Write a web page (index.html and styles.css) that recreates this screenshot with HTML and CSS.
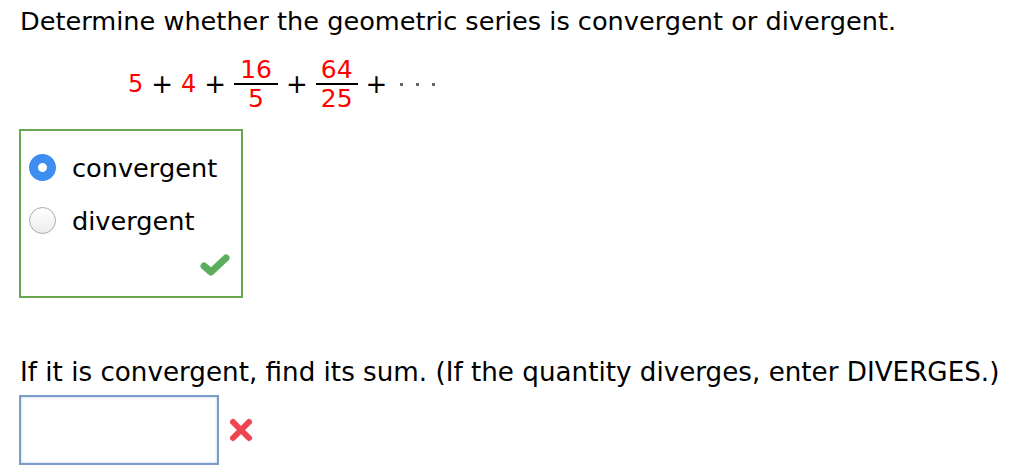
FILE: index.html
```html
<!DOCTYPE html>
<html>
<head>
<meta charset="utf-8">
<link rel="stylesheet" href="styles.css">
</head>
<body>
<div class="page">
  <p class="q">Determine whether the geometric series is convergent or divergent.</p>
  <div class="eq">
    <span class="r">5</span><span class="op">+</span><span class="r">4</span><span class="op">+</span>
    <span class="frac"><span class="num r">16</span><span class="den r">5</span></span>
    <span class="op">+</span>
    <span class="frac f2"><span class="num r">64</span><span class="den r">25</span></span>
    <span class="op">+</span><span class="dots"><i></i><i></i><i></i></span>
  </div>
  <div class="choices">
    <div class="choice"><span class="radio on"></span><span>convergent</span></div>
    <div class="choice"><span class="radio"></span><span>divergent</span></div>
    <div class="mark">
      <svg width="32" height="26" viewBox="0 0 32 26"><path d="M5 14 L12 20 L27 6" fill="none" stroke="#5cae5c" stroke-width="7" stroke-linecap="round" stroke-linejoin="round"/></svg>
    </div>
  </div>
  <p class="q2">If it is convergent, find its sum. (If the quantity diverges, enter DIVERGES.)</p>
  <div class="answer">
    <div class="input"></div>
    <svg class="x" width="28" height="28" viewBox="0 0 28 28"><path d="M6 6 L22 22 M22 6 L6 22" fill="none" stroke="#f04550" stroke-width="6" stroke-linecap="round"/></svg>
  </div>
</div>
</body>
</html>
```
FILE: styles.css
```css
html, body { margin: 0; padding: 0; background: #fff; }
.page { font-family: "DejaVu Sans", Verdana, sans-serif; font-size: 25.6px; color: #000; padding: 0 0 0 20px; }
.q { margin: 0; padding-top: 7px; line-height: 28px; }
.eq { display: flex; align-items: center; margin-left: 108px; margin-top: 19px; height: 60px; font-size: 24px; }
.r { color: #ff0000; }
.op { margin: 0 8px; font-size: 26px; line-height: 28px; }
.frac { display: inline-flex; flex-direction: column; align-items: center; line-height: 27px; font-size: 25px; }
.num { border-bottom: 2px solid #000; padding: 0 6px; }
.f2 .num { padding: 0 5px; }
.dots { display: inline-flex; gap: 13px; margin-left: 5px; }
.dots i { width: 3px; height: 3px; background: #666; display: block; }
.choices { margin-top: 15px; margin-left: -1px; width: 220px; height: 165px; border: 2px solid #6aa84f; position: relative; }
.choice { display: flex; align-items: center; height: 53px; }
.choice:first-child { margin-top: 10px; }
.radio { width: 27px; height: 27px; border-radius: 50%; border: 1px solid #aaa; box-sizing: border-box; margin: 0 16px 0 8px; background: linear-gradient(#fff, #ececec); display: inline-block; }
.radio.on { border: 9px solid #3d8ef0; background: #fff; }
.mark { position: absolute; right: 10px; bottom: 12px; }
.q2 { margin: 58px 0 0 0; line-height: 32px; font-size: 26.2px; }
.answer { display: flex; align-items: center; margin-top: 7px; }
.input { width: 196px; height: 66px; border: 2px solid #7a9cc6; margin-left: -1px; box-shadow: inset 0 0 3px #b8cce4; }
.x { margin-left: 8px; }
```
